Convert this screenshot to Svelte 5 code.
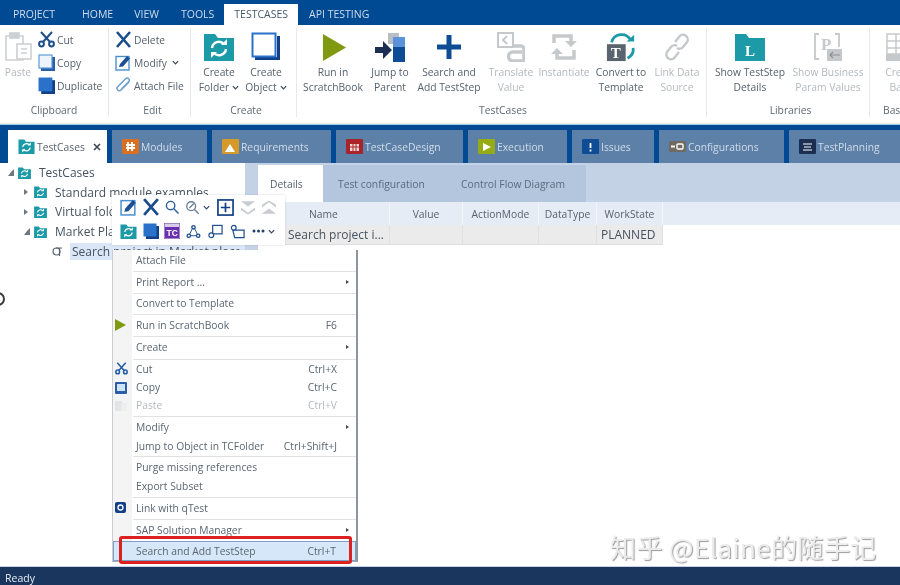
<script>
  const topTabs = ['PROJECT', 'HOME', 'VIEW', 'TOOLS', 'TESTCASES', 'API TESTING'];
  const cols = [
    { name: 'Name', w: 132 },
    { name: 'Value', w: 73 },
    { name: 'ActionMode', w: 76 },
    { name: 'DataType', w: 58 },
    { name: 'WorkState', w: 66 }
  ];
</script>

{#snippet chevron()}
  <svg class="chev" viewBox="0 0 8 5"><path d="M1 1l3 3 3-3" fill="none" stroke="#33475b" stroke-width="1.4" /></svg>
{/snippet}

{#snippet folder(color, w = 13, h = 12)}
  <svg width={w} height={h} viewBox="0 0 30 28">
    <path d="M0 1h11l3 4h16v23H0z" fill={color} />
    <path d="M8 15a7 7 0 0 1 12-4M22 16a7 7 0 0 1-12 4" fill="none" stroke="#fff" stroke-width="2.4" />
    <path d="M17 12h6V6zM13 19H7v6z" fill="#fff" />
  </svg>
{/snippet}

{#snippet scissors(c)}
  <svg width="17" height="17" viewBox="0 0 17 17" fill="none" stroke={c} stroke-width="2">
    <path d="M3 1l9 10M14 1L5 11" /><circle cx="3.5" cy="13" r="2.4" /><circle cx="13.5" cy="13" r="2.4" />
  </svg>
{/snippet}

{#snippet stack(w = 16)}
  <svg width={w} height={w} viewBox="0 0 16 16">
    <rect x="3" y="3" width="13" height="13" fill="#123f86" /><rect x="0.5" y="0.5" width="13" height="13" fill="#2a72c9" />
  </svg>
{/snippet}

{#snippet xmark(w = 17)}
  <svg width={w} height={w} viewBox="0 0 17 17"><path d="M2 1l13 15M15 1L2 16" stroke="#1c4c8c" stroke-width="2.6" fill="none" /></svg>
{/snippet}

{#snippet edit(w = 17)}
  <svg width={w} height={w} viewBox="0 0 17 17">
    <rect x="1" y="2.5" width="13" height="13.5" fill="#fff" stroke="#4b8fd0" stroke-width="1.4" />
    <path d="M4 13l1-3 7-8 3 2.5-7 8z" fill="#1d4f95" />
  </svg>
{/snippet}

<div class="app">
  <header class="menubar">
    {#each topTabs as t, i}
      <span class="toptab" class:active={i === 4}>{t}</span>
    {/each}
  </header>

  <section class="ribbon">
    <div class="group clipboard">
      <div class="body">
        <button class="big paste dis">
          <span class="ico">
            <svg width="30" height="30" viewBox="0 0 30 30" fill="none" stroke="#cdd0d3" stroke-width="1.6">
              <path d="M3 4h17v24H3z" /><rect x="7" y="1" width="9" height="5" fill="#cdd0d3" /><rect x="14" y="12" width="14" height="15" fill="#fff" /><path d="M18 17h6M18 21h6" />
            </svg>
          </span>
          <span class="lbl">Paste</span>
        </button>
        <div class="smalls">
          <div class="small">{@render scissors('#1f4e8c')}<span>Cut</span></div>
          <div class="small">
            <svg width="17" height="17" viewBox="0 0 17 17"><rect x="3" y="3" width="14" height="14" fill="#2a5fa8" /><rect x="1" y="1" width="13" height="13" fill="#eef4fb" stroke="#5a9bd8" stroke-width="1.2" /></svg>
            <span>Copy</span>
          </div>
          <div class="small">{@render stack(17)}<span>Duplicate</span></div>
        </div>
      </div>
      <div class="glabel">Clipboard</div>
    </div>

    <div class="group edit">
      <div class="body">
        <div class="smalls">
          <div class="small">{@render xmark()}<span>Delete</span></div>
          <div class="small">{@render edit()}<span>Modify</span>{@render chevron()}</div>
          <div class="small">
            <svg width="17" height="17" viewBox="0 0 17 17" fill="none" stroke="#6b9ccc" stroke-width="1.5"><path d="M14 5L6 13a2.3 2.3 0 0 1-3.300-3.300l8-8a1.800 1.800 0 0 1 3 3l-7 7" /></svg>
            <span>Attach File</span>
          </div>
        </div>
      </div>
      <div class="glabel">Edit</div>
    </div>

    <div class="group create">
      <div class="body">
        <button class="big w46">
          <span class="ico">{@render folder('#1d9aa8', 30, 28)}</span>
          <span class="lbl">Create<br />Folder{@render chevron()}</span>
        </button>
        <button class="big w48">
          <span class="ico">
            <svg width="30" height="30" viewBox="0 0 30 30"><path d="M4 28h25V4h-3v21H4z" fill="#123f86" /><rect x="1.5" y="1.5" width="23" height="23" fill="#fff" stroke="#2a72c9" stroke-width="2" /></svg>
          </span>
          <span class="lbl">Create<br />Object{@render chevron()}</span>
        </button>
      </div>
      <div class="glabel">Create</div>
    </div>

    <div class="group testcases">
      <div class="body">
        <button class="big w66">
          <span class="ico"><svg class="runic" width="25" height="29" viewBox="0 0 26 30"><path d="M1 1l24 14L1 29z" fill="#7f9a12" /></svg></span>
          <span class="lbl">Run in<br />ScratchBook</span>
        </button>
        <button class="big w48">
          <span class="ico">
            <svg width="32" height="30" viewBox="0 0 32 30">
              <rect x="14" y="1" width="11" height="11" fill="#b9bec5" /><rect x="19" y="5" width="12" height="10" fill="#5b92d8" /><rect x="19" y="15" width="12" height="15" fill="#0f4c96" />
              <path d="M1 15h8v-6l9 9-9 9v-6H1z" fill="#1c2f52" />
            </svg>
          </span>
          <span class="lbl">Jump to<br />Parent</span>
        </button>
        <button class="big w70">
          <span class="ico"><svg width="24" height="24" viewBox="0 0 24 24"><path d="M9.5 0h5v9.500H24v5h-9.500V24h-5v-9.500H0v-5h9.500z" fill="#0f4c96" /></svg></span>
          <span class="lbl">Search and<br />Add TestStep</span>
        </button>
        <button class="big w54 dis">
          <span class="ico">
            <svg width="28" height="30" viewBox="0 0 28 30" fill="none" stroke="#c6c9cc" stroke-width="2">
              <rect x="1" y="1" width="15" height="14" /><path d="M10 4l-4 4 4 4" />
              <path d="M15 14h9a3 3 0 0 1 3 3v12h-11a4 4 0 0 1 0-9h9" stroke-width="3.500" />
            </svg>
          </span>
          <span class="lbl">Translate<br />Value</span>
        </button>
        <button class="big w52 dis">
          <span class="ico">
            <svg width="26" height="28" viewBox="0 0 26 28" fill="none" stroke="#c6c9cc" stroke-width="3.5">
              <path d="M3 10V3h17v5M23 17v8H6v-5" /><path d="M14 8h12l-6 6zM0 21h12l-6-6z" fill="#c6c9cc" stroke="none" />
            </svg>
          </span>
          <span class="lbl">Instantiate</span>
        </button>
        <button class="big w62">
          <span class="ico">
            <svg width="30" height="30" viewBox="0 0 32 30">
              <rect x="1" y="12" width="20" height="18" fill="#5a646e" />
              <text x="5" y="27" font-size="16" font-weight="700" fill="#fff" font-family="Liberation Serif">T</text>
              <path d="M6 10A11 11 0 0 1 26 7M29 16a11 11 0 0 1-6 11" fill="none" stroke="#1d9aa8" stroke-width="3" />
              <path d="M22 9h8V2z" fill="#1d9aa8" />
            </svg>
          </span>
          <span class="lbl">Convert to<br />Template</span>
        </button>
        <button class="big w50 dis">
          <span class="ico">
            <svg width="28" height="28" viewBox="0 0 28 28" fill="none" stroke="#c6c9cc" stroke-width="2.4">
              <path d="M12 9l4-5a4.500 4.500 0 0 1 8 5l-4 5a4.500 4.500 0 0 1-6 1" /><path d="M16 19l-4 5a4.500 4.500 0 0 1-8-5l4-5a4.500 4.500 0 0 1 6-1" />
            </svg>
          </span>
          <span class="lbl">Link Data<br />Source</span>
        </button>
      </div>
      <div class="glabel">TestCases</div>
    </div>

    <div class="group libraries">
      <div class="body">
        <button class="big w76">
          <span class="ico">
            <svg width="30" height="28" viewBox="0 0 30 28"><path d="M0 1h11l3 4h16v23H0z" fill="#1d9aa8" /><text x="10" y="23" font-size="15" font-weight="700" fill="#fff" font-family="Liberation Serif">L</text></svg>
          </span>
          <span class="lbl">Show TestStep<br />Details</span>
        </button>
        <button class="big w80 dis">
          <span class="ico">
            <svg width="28" height="28" viewBox="0 0 28 28" fill="none" stroke="#c6c9cc" stroke-width="1.8">
              <path d="M5 1H1v25h4M21 1h4v13" /><text x="7" y="17" font-size="17" font-weight="700" fill="#c6c9cc" stroke="none" font-family="Liberation Serif">P</text>
              <rect x="13" y="16" width="15" height="12" fill="#c6c9cc" stroke="none" /><path d="M26 22h-10m3-3l-3 3 3 3" stroke="#8c9095" stroke-width="1.2" />
            </svg>
          </span>
          <span class="lbl">Show Business<br />Param Values</span>
        </button>
      </div>
      <div class="glabel">Libraries</div>
    </div>

    <div class="group base">
      <div class="body">
        <button class="big w62 dis">
          <span class="ico">
            <svg width="30" height="28" viewBox="0 0 30 28" fill="none" stroke="#c6c9cc" stroke-width="1.5">
              <path d="M1 1h28v20H1zM1 8h28M1 15h28M10 1v20M20 1v20" /><rect x="0" y="21" width="30" height="7" fill="#c6c9cc" stroke="none" />
            </svg>
          </span>
          <span class="lbl">Create<br />Base</span>
        </button>
      </div>
      <div class="glabel">Base</div>
    </div>
  </section>

  <nav class="docbar">
    <div class="doctab active w99">
      {@render folder('#1d9aa8', 17, 15)}
      <span>TestCases</span>
      <svg class="close" width="8" height="8" viewBox="0 0 8 8"><path d="M1 1l6 6M7 1L1 7" stroke="#3c4650" stroke-width="1.6" /></svg>
    </div>
    <div class="doctab w95">
      <svg width="17" height="15" viewBox="0 0 17 15"><rect width="17" height="15" rx="1" fill="#d96f22" /><path d="M6 3v9M10 3v9M4 6h9M4 9h9" stroke="#fff" stroke-width="1.8" /></svg>
      <span>Modules</span>
    </div>
    <div class="doctab w119">
      <svg width="17" height="15" viewBox="0 0 17 15"><rect width="17" height="15" rx="1" fill="#d59a2a" /><path d="M3 13l5-8 5 8z" fill="#fff" /></svg>
      <span>Requirements</span>
    </div>
    <div class="doctab w128">
      <svg width="17" height="15" viewBox="0 0 17 15"><rect width="17" height="15" rx="1" fill="#a8242a" /><rect x="4" y="5" width="9" height="7" fill="#f1d6d4" /><path d="M4 8h9M7 5v7M10 5v7" stroke="#a8242a" /></svg>
      <span>TestCaseDesign</span>
    </div>
    <div class="doctab w99b">
      <svg width="17" height="15" viewBox="0 0 17 15"><rect width="17" height="15" rx="1" fill="#94ab16" /><path d="M5 4l8 4-8 4z" fill="#fff" /></svg>
      <span>Execution</span>
    </div>
    <div class="doctab w82">
      <svg width="17" height="15" viewBox="0 0 17 15"><rect width="17" height="15" rx="1" fill="#0f4c96" /><path d="M8.5 4v5M8.5 10.500v2" stroke="#fff" stroke-width="1.8" /></svg>
      <span>Issues</span>
    </div>
    <div class="doctab w125">
      <svg width="17" height="11" viewBox="0 0 17 11"><rect width="17" height="11" rx="1" fill="#6f6a62" /><path d="M2 5.500h4" stroke="#fff" stroke-width="2" /><rect x="8" y="3" width="6" height="5" rx="1" fill="none" stroke="#fff" stroke-width="1.4" /></svg>
      <span>Configurations</span>
    </div>
    <div class="doctab grow">
      <svg width="17" height="15" viewBox="0 0 17 15"><rect width="17" height="15" rx="1" fill="#1c2f52" /><path d="M4 5h9M5 8h7M4 11h9" stroke="#fff" stroke-width="1.2" /></svg>
      <span>TestPlanning</span>
    </div>
  </nav>

  <main class="content">
    <aside class="tree">
      <div class="row lvl0"><span class="tw open"></span>{@render folder('#1d9aa8')}<span class="name">TestCases</span></div>
      <div class="row lvl1"><span class="tw"></span>{@render folder('#1d9aa8')}<span class="name">Standard module examples</span></div>
      <div class="row lvl1"><span class="tw"></span>{@render folder('#1d9aa8')}<span class="name">Virtual folders</span></div>
      <div class="row lvl1"><span class="tw open"></span>{@render folder('#1d9aa8')}<span class="name">Market Place</span></div>
      <div class="row lvl2">
        <svg class="leaf" width="11" height="11" viewBox="0 0 11 11" fill="none" stroke="#5a6570" stroke-width="1.2"><circle cx="4.5" cy="5.500" r="3.500" /><path d="M4 2h6M7.500 2v8" /></svg>
        <span class="name sel">Search project in Market place</span>
      </div>
    </aside>
    <div class="splitter"></div>
    <section class="detail">
      <div class="subtabs">
        <span class="sub active">Details</span>
        <span class="sub w122">Test configuration</span>
        <span class="sub w141">Control Flow Diagram</span>
      </div>
      <div class="ghead">
        {#each cols as c}
          <span class="hcell" style="width:{c.w}px">{c.name}</span>
        {/each}
      </div>
      <div class="grow-row">
        <span class="cell first" style="width:132px">Search project i...</span>
        <span class="cell" style="width:73px"></span>
        <span class="cell" style="width:76px"></span>
        <span class="cell" style="width:58px"></span>
        <span class="cell last" style="width:66px">PLANNED</span>
      </div>
    </section>
  </main>

  <footer class="status">Ready</footer>

  <div class="mini">
    <div class="mrow">
      <span class="mi">{@render edit(18)}</span>
      <span class="mi">{@render xmark(18)}</span>
      <span class="mi">
        <svg width="14" height="14" viewBox="0 0 15 15" fill="none" stroke="#2a5d9c" stroke-width="1.5"><circle cx="6" cy="6" r="4.500" /><path d="M9.5 9.500l5 5" /></svg>
      </span>
      <span class="mi wide">
        <svg width="15" height="15" viewBox="0 0 17 17" fill="none" stroke="#6a7d93" stroke-width="1.5"><circle cx="7" cy="7" r="5" /><path d="M10.5 10.500l5 5M5 9l5-5" /></svg>
        {@render chevron()}
      </span>
      <span class="mi">
        <svg width="17" height="17" viewBox="0 0 18 18" fill="none" stroke="#123f86" stroke-width="1.8"><rect x="1" y="1" width="16" height="16" /><path d="M9 4v10M4 9h10" /></svg>
      </span>
      <span class="mi">
        <svg width="16" height="15" viewBox="0 0 18 16" fill="#c9cdd1"><path d="M1 1h16L9 7zM1 8l8 6 8-6v3l-8 5-8-5z" /></svg>
      </span>
      <span class="mi">
        <svg width="16" height="15" viewBox="0 0 18 16" fill="#c9cdd1"><path d="M1 15h16L9 9zM1 8l8-6 8 6V5L9 0 1 5z" /></svg>
      </span>
    </div>
    <div class="mrow">
      <span class="mi">{@render folder('#1d9aa8', 17, 15)}</span>
      <span class="mi">{@render stack(16)}</span>
      <span class="mi">
        <svg width="16" height="16" viewBox="0 0 16 16"><rect width="16" height="16" fill="#d8cdea" stroke="#6a3fa0" /><rect x="1" y="4" width="14" height="11" fill="#6a2fb0" /><text x="2.5" y="13" font-size="8.5" font-weight="700" fill="#fff" font-family="Liberation Sans">TC</text></svg>
      </span>
      <span class="mi">
        <svg width="15" height="15" viewBox="0 0 16 15" fill="none" stroke="#1f4e8c" stroke-width="1.4"><path d="M8 2L3 12M8 2l5 10M3 12h10" stroke-width="1" /><circle cx="8" cy="3" r="1.800" fill="#fff" /><circle cx="3" cy="12" r="1.800" fill="#fff" /><circle cx="13" cy="12" r="1.800" fill="#fff" /></svg>
      </span>
      <span class="mi">
        <svg width="15" height="15" viewBox="0 0 16 15" fill="none" stroke="#1f4e8c" stroke-width="1.3"><rect x="5" y="1" width="10" height="9" /><circle cx="3.5" cy="11.500" r="2.500" fill="#fff" /></svg>
      </span>
      <span class="mi">
        <svg width="15" height="15" viewBox="0 0 16 15" fill="none" stroke="#1f4e8c" stroke-width="1.3"><path d="M3 6h12v8H5z" /><circle cx="4" cy="3.500" r="2.500" fill="#fff" /></svg>
      </span>
      <span class="mi wide dots">
        <svg width="13" height="4" viewBox="0 0 13 4" fill="#1f3f6e"><circle cx="2" cy="2" r="1.500" /><circle cx="6.5" cy="2" r="1.500" /><circle cx="11" cy="2" r="1.500" /></svg>
        {@render chevron()}
      </span>
    </div>
  </div>

  <div class="menu">
    <div class="mg"><div class="it"><span>Attach File</span></div></div>
    <div class="mg"><div class="it"><span>Print Report ...</span><i class="tri"></i></div></div>
    <div class="mg shortrow"><div class="it"><span>Convert to Template</span></div></div>
    <div class="mg">
      <div class="it"><svg class="gi" width="11" height="12" viewBox="0 0 11 12"><path d="M0 0l11 6-11 6z" fill="#7f9a12" /></svg><span>Run in ScratchBook</span><kbd>F6</kbd></div>
    </div>
    <div class="mg tallrow"><div class="it"><span>Create</span><i class="tri"></i></div></div>
    <div class="mg tight">
      <div class="it"><span class="gi">{@render scissors('#1f5ba5')}</span><span>Cut</span><kbd>Ctrl+X</kbd></div>
      <div class="it">
        <svg class="gi" width="12" height="12" viewBox="0 0 12 12"><rect width="12" height="12" rx="1" fill="#2a5fa8" /><rect x="2" y="2" width="8" height="7" fill="#cfe3f8" /></svg>
        <span>Copy</span><kbd>Ctrl+C</kbd>
      </div>
      <div class="it off">
        <svg class="gi" width="12" height="12" viewBox="0 0 12 12" fill="#e2e4e6"><rect x="0" y="1" width="7" height="10" /><rect x="6" y="3" width="6" height="8" fill="#eceeef" /></svg>
        <span>Paste</span><kbd>Ctrl+V</kbd>
      </div>
    </div>
    <div class="mg shortgroup">
      <div class="it"><span>Modify</span><i class="tri"></i></div>
      <div class="it"><span>Jump to Object in TCFolder</span><kbd>Ctrl+Shift+J</kbd></div>
    </div>
    <div class="mg">
      <div class="it"><span>Purge missing references</span></div>
      <div class="it"><span>Export Subset</span></div>
    </div>
    <div class="mg">
      <div class="it">
        <svg class="gi" width="11" height="11" viewBox="0 0 11 11"><rect width="11" height="11" rx="2" fill="#123f86" /><circle cx="5.5" cy="5.500" r="2.500" fill="none" stroke="#fff" stroke-width="1.3" /></svg>
        <span>Link with qTest</span>
      </div>
    </div>
    <div class="mg"><div class="it"><span>SAP Solution Manager</span><i class="tri"></i></div></div>
    <div class="it hot"><span>Search and Add TestStep</span><kbd>Ctrl+T</kbd></div>
  </div>

  <div class="redbox"></div>
  <div class="ring"></div>
  <div class="mark">知乎 @Elaine的随手记</div>
</div>

<style>
  :global(body) { margin: 0; background: #fff; }
  .app {
    position: relative;
    width: 900px;
    height: 585px;
    overflow: hidden;
    display: flex;
    flex-direction: column;
    font-family: "Open Sans", "Noto Sans", "Liberation Sans", sans-serif;
    font-size: 10.3px;
    color: #56626e;
    background: #fff;
    filter: blur(0.35px);
  }

  .menubar {
    height: 25px;
    flex: none;
    display: flex;
    align-items: flex-end;
    background: #004a94;
    padding-left: 13px;
    box-sizing: border-box;
  }
  .toptab {
    color: #cfdcea;
    font-size: 10.5px;
    height: 21px;
    line-height: 20px;
    margin-right: 22px;
  }
  .toptab:first-child { margin-right: 27px; }
  .toptab:nth-child(2), .toptab:nth-child(4) { margin-right: 21px; }
  .toptab.active {
    background: #fff;
    color: #44586c;
    padding: 0 10px;
    margin: 0 11px 0 -11px;
  }

  .ribbon {
    height: 100px;
    flex: none;
    display: flex;
    box-sizing: border-box;
    padding-bottom: 7px;
    background: #fff;
    border-bottom: 1px solid #9dd0f5;
    box-shadow: inset 0 -6px 0 -5px #eeeade;
    overflow: hidden;
  }
  .group {
    flex: none;
    display: flex;
    flex-direction: column;
    box-sizing: border-box;
    border-right: 1px solid #e6e8ea;
    margin-top: 3px;
  }
  .body { flex: 1; display: flex; }
  .glabel { height: 13px; line-height: 13px; text-align: center; color: #5e6973; }
  .clipboard { width: 109px; }
  .edit { width: 82px; padding-left: 6px; }
  .create { width: 106px; padding-left: 5px; }
  .testcases { width: 410px; padding-left: 3px; }
  .libraries { width: 163px; padding-left: 5px; }
  .base { width: 62px; border-right: 0; }
  .base .glabel { padding-left: 13px; text-align: left; }

  .big {
    all: unset;
    flex: none;
    display: flex;
    flex-direction: column;
    align-items: center;
    text-align: center;
    font-size: 10.3px;
    line-height: 15px;
    white-space: nowrap;
    color: #56626e;
  }
  .ico { height: 36px; display: flex; align-items: center; justify-content: center; margin-top: 1px; }
  .runic { margin-left: 2px; }
  .lbl { display: block; }
  .dis, .dis .lbl { color: #b4b9be; }
  .paste { width: 36px; }
  .w46 { width: 46px; }
  .w48 { width: 48px; }
  .w50 { width: 50px; }
  .w52 { width: 52px; }
  .w54 { width: 54px; }
  .w62 { width: 62px; }
  .w66 { width: 66px; }
  .w70 { width: 70px; }
  .w76 { width: 76px; }
  .w80 { width: 80px; }
  .chev { width: 7px; height: 5px; margin-left: 3px; vertical-align: 1px; }

  .smalls { display: flex; flex-direction: column; gap: 6px; padding-top: 3px; }
  .small { display: flex; align-items: center; gap: 2px; height: 17px; white-space: nowrap; }
  .clipboard .smalls { padding-left: 2px; }

  .docbar {
    height: 38px;
    flex: none;
    display: flex;
    gap: 5px;
    background: #004a94;
    padding: 5px 0 0 8px;
    box-sizing: border-box;
  }
  .doctab {
    flex: none;
    display: flex;
    align-items: center;
    gap: 2px;
    box-sizing: border-box;
    padding-left: 10px;
    background: #5c80a8;
    color: #d3dce7;
    position: relative;
  }
  .doctab.active { background: #fff; color: #56626e; }
  .close { position: absolute; left: 85px; top: 13px; }
  .w99 { width: 99px; }
  .w95 { width: 95px; }
  .w119 { width: 119px; }
  .w128 { width: 127px; }
  .w99b { width: 99px; }
  .w82 { width: 82px; }
  .w125 { width: 125px; }
  .grow { flex: 1; }

  .content { flex: 1; display: flex; min-height: 0; background: #fff; }
  .tree { width: 245px; flex: none; font-size: 12px; color: #46525e; overflow: hidden; }
  .row { height: 19.6px; display: flex; align-items: center; white-space: nowrap; }
  .lvl0 { padding-left: 8px; }
  .lvl1 { padding-left: 24px; }
  .lvl2 { padding-left: 52px; }
  .tw { width: 0; height: 0; margin-right: 6px; border-left: 4px solid #6d7882; border-top: 3px solid transparent; border-bottom: 3px solid transparent; }
  .tw.open { border-left: 3px solid transparent; border-top: 3px solid transparent; border-bottom: 4px solid #6d7882; border-right: 3px solid #6d7882; margin-right: 4px; }
  .row .name { margin-left: 8px; }
  .leaf { flex: none; }
  .name.sel {
    margin-left: 7px;
    flex: 1;
    background: #dbe7f6;
    padding-left: 2px;
    line-height: 17px;
  }
  .splitter { width: 13px; flex: none; height: 87px; background: #c3d2e5; }
  .detail { flex: 1; min-width: 0; display: flex; flex-direction: column; align-items: stretch; }
  .subtabs { height: 39px; flex: none; display: flex; align-items: flex-end; background: #c3d2e5; }
  .sub { height: 37px; line-height: 39px; box-sizing: border-box; background: #b3c6dd; color: #596b7d; padding-left: 15px; }
  .sub.active { width: 65px; background: #fff; color: #56626e; padding-left: 12px; }
  .w122 { width: 122px; }
  .w141 { width: 141px; padding-left: 16px; }
  .ghead { height: 23px; flex: none; display: flex; background: #e6ecf5; }
  .hcell { box-sizing: border-box; height: 23px; line-height: 25px; text-align: center; border-right: 1px solid #f2f4f8; color: #56626e; }
  .grow-row { height: 20px; flex: none; display: flex; }
  .cell { box-sizing: border-box; height: 20px; line-height: 20px; background: #ebebeb; border-right: 1px solid #e0e0e0; border-bottom: 1px solid #dcdcdc; font-size: 12px; color: #46525e; white-space: nowrap; overflow: hidden; }
  .first { padding-left: 30px; }
  .last { padding-left: 4px; }

  .status {
    height: 18px;
    flex: none;
    background: #1a365f;
    color: #e6ebf2;
    padding-left: 5px;
    font-size: 10.5px;
    line-height: 22px;
    box-shadow: 0 -1px 0 #c4d4e6;
  }

  .mini {
    position: absolute;
    left: 112px;
    top: 195px;
    width: 173px;
    height: 50px;
    box-sizing: border-box;
    background: #fff;
    box-shadow: 0 0 2px rgba(120, 130, 140, .35);
    padding: 0 0 0 6px;
  }
  .mrow { display: flex; height: 24px; align-items: center; }
  .mi { width: 21.7px; flex: none; display: flex; align-items: center; justify-content: center; }
  .mi.wide { width: 32px; justify-content: flex-start; padding-left: 2px; box-sizing: border-box; }
  .mi.dots { width: 36px; padding-left: 4px; }

  .menu {
    position: absolute;
    left: 112px;
    top: 250px;
    width: 246px;
    height: 312px;
    box-sizing: border-box;
    background: linear-gradient(to right, #f4f4f4 0, #f4f4f4 19px, #fff 19px);
    border-right: 2px solid #8d949c;
    border-bottom: 1px solid #a8aeb5;
    border-left: 1px solid #c9cdd2;
    color: #5a6672;
  }
  .mg { padding: 0 0 2px; margin-left: 20px; position: relative; border-bottom: 1px solid #e2e2e2; }
  .mg:nth-last-child(2) { border-bottom: 0; }
  .it { position: relative; height: 19px; display: flex; align-items: center; padding-left: 3px; padding-right: 19px; white-space: nowrap; }
  .tight .it { height: 18px; }
  .shortrow .it { height: 18px; }
  .tallrow .it { height: 20px; }
  .shortgroup { padding-bottom: 1px; }
  .off { color: #b4b9be; }
  .it kbd { margin-left: auto; font: inherit; }
  .gi { position: absolute; left: -18px; top: 4px; }
  span.gi { top: 2px; display: block; }
  span.gi :global(svg) { width: 13px; height: 13px; }
  .tri { position: absolute; right: 7px; top: 8px; width: 0; height: 0; border-left: 3px solid #3e4852; border-top: 2px solid transparent; border-bottom: 2px solid transparent; }
  .hot {
    margin: 0;
    padding-left: 22px;
    background: #d6e7f9;
    border: 1px solid #7fa0c4;
    box-sizing: border-box;
    height: 20px;
  }

  .redbox {
    position: absolute;
    left: 119px;
    top: 536px;
    width: 233px;
    height: 28px;
    box-sizing: border-box;
    border: 3px solid #dd2020;
    border-radius: 3px;
  }
  .ring {
    position: absolute;
    left: -9px;
    top: 292px;
    width: 10px;
    height: 10px;
    border: 2.5px solid #3c3c3c;
    border-radius: 50%;
  }
  .mark {
    position: absolute;
    left: 610px;
    top: 529px;
    font-family: "Noto Sans CJK SC", "Noto Sans", sans-serif;
    font-size: 26px;
    letter-spacing: .4px;
    line-height: 36px;
    color: #ececec;
    text-shadow: 1px 1px 1px #9c9c9c;
    white-space: nowrap;
  }
</style>
